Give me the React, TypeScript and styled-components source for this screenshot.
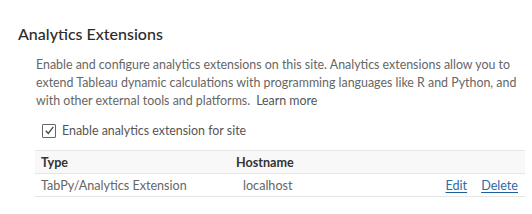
import React from 'react';
import styled, { createGlobalStyle } from 'styled-components';

const GlobalStyle = createGlobalStyle`
  html, body {
    margin: 0;
    padding: 0;
    background: #ffffff;
    font-family: Lato, 'Open Sans', sans-serif;
  }
`;

const Page = styled.div`
  width: 532px;
  height: 214px;
  padding: 25px 7px 0 18px;
  box-sizing: border-box;
  overflow: hidden;
`;

const Title = styled.h2`
  margin: 0;
  font-size: 16px;
  line-height: 18px;
  font-weight: 500;
  color: #2b2b2b;
`;

const Body = styled.div`
  padding-left: 18px;
  margin-top: 13px;
`;

const Description = styled.p`
  margin: 0;
  font-size: 12.4px;
  line-height: 18px;
  color: #666666;
  white-space: nowrap;
`;

const LearnMore = styled.a`
  color: #555555;
  text-decoration: none;
  margin-left: 6px;
`;

const CheckRow = styled.label`
  display: flex;
  align-items: center;
  gap: 6px;
  margin: 13px 0 0 6px;
  font-size: 12.4px;
  color: #555555;
`;

const Box = styled.span`
  width: 12px;
  height: 12px;
  border: 1px solid #666666;
  border-radius: 1px;
  display: flex;
  align-items: center;
  justify-content: center;
`;

const Table = styled.table`
  width: calc(100% + 1px);
  margin: 12px 0 0 -1px;
  border-collapse: collapse;
  font-size: 12.6px;
`;

const Head = styled.th<{ $w?: string }>`
  text-align: left;
  font-weight: 700;
  color: #333333;
  background: #f8f8f8;
  border-top: 1px solid #e6e6e6;
  border-bottom: 1px solid #e6e6e6;
  height: 22px;
  padding: 0 6px;
  width: ${(p) => p.$w || 'auto'};
`;

const Cell = styled.td<{ $indent?: boolean; $right?: boolean }>`
  color: #666666;
  border-bottom: 1px solid #e6e6e6;
  height: 22px;
  padding: 0 7px 0 ${(p) => (p.$indent ? '13px' : '6px')};
  text-align: ${(p) => (p.$right ? 'right' : 'left')};
`;

const Action = styled.a`
  color: #2f6aa3;
  text-decoration: underline;
  text-decoration-color: #1f5f96;
  text-underline-offset: 2px;
  margin-left: 14px;
`;

export default function App() {
  return (
    <>
      <GlobalStyle />
      <Page>
        <Title>Analytics Extensions</Title>
        <Body>
          <Description>
            Enable and configure analytics extensions on this site. Analytics extensions allow you to
            <br />
            extend Tableau dynamic calculations with programming languages like R and Python, and
            <br />
            with other external tools and platforms.
            <LearnMore href="#">Learn more</LearnMore>
          </Description>
          <CheckRow>
            <Box>
              <svg width="11" height="11" viewBox="0 0 11 11" fill="none">
                <path d="M1.8 5.8 L4.3 8.4 L9.3 1.8" stroke="#444" strokeWidth="1.3" />
              </svg>
            </Box>
            Enable analytics extension for site
          </CheckRow>
          <Table>
            <thead>
              <tr>
                <Head $w="183px">Type</Head>
                <Head>Hostname</Head>
                <Head />
              </tr>
            </thead>
            <tbody>
              <tr>
                <Cell>TabPy/Analytics Extension</Cell>
                <Cell $indent>localhost</Cell>
                <Cell $right>
                  <Action href="#">Edit</Action>
                  <Action href="#">Delete</Action>
                </Cell>
              </tr>
            </tbody>
          </Table>
        </Body>
      </Page>
    </>
  );
}
